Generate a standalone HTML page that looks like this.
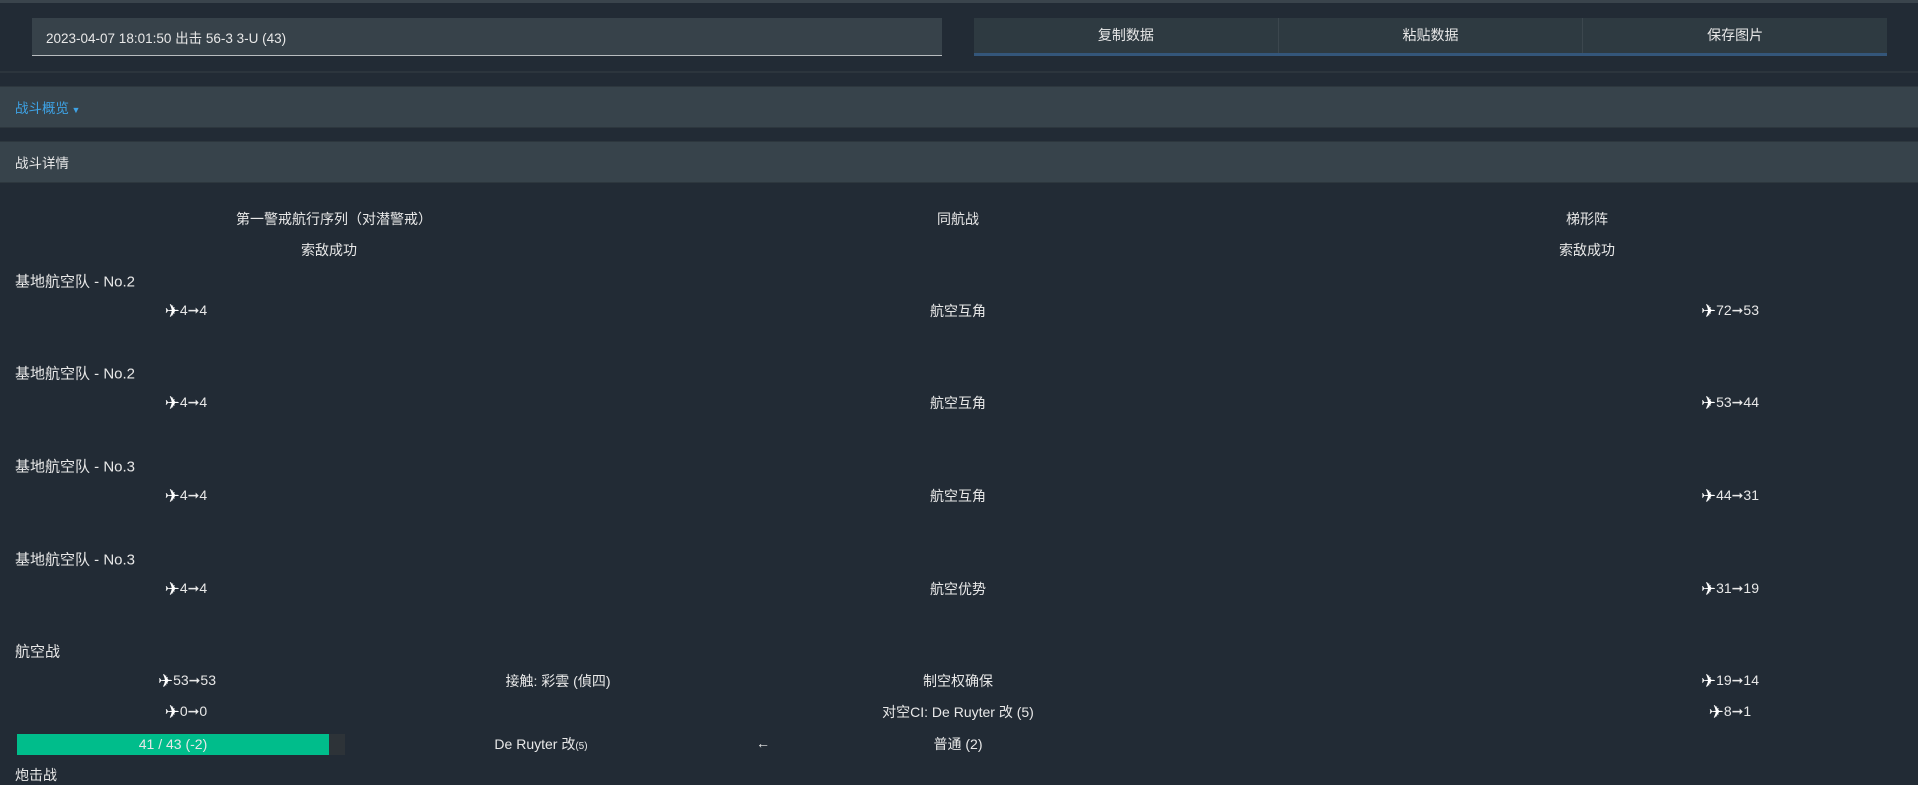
<!DOCTYPE html>
<html><head><meta charset="utf-8"><style>
*{margin:0;padding:0;box-sizing:border-box}
body{width:1918px;height:769px;overflow:hidden;background:#222b35;font-family:"Liberation Sans","Noto Sans CJK SC",sans-serif;color:#e8e8e8;position:relative;font-size:14px}
.a{position:absolute;white-space:nowrap}
.c{position:absolute;white-space:nowrap;transform:translate(-50%,-50%)}
.l{position:absolute;white-space:nowrap;transform:translateY(-50%);font-size:15px}
.p{font-size:18px;line-height:1;vertical-align:-2px;color:#fff}
</style></head><body>
<div class="a" style="left:0;top:0;width:1918px;height:3px;background:#3a444c"></div>
<div class="a" style="left:0;top:71px;width:1918px;height:2px;background:#2c353d"></div>
<div class="a" style="left:32px;top:18px;width:910px;height:38px;background:#37424a;border-bottom:1px solid #b8bcbf"></div>
<div class="l" style="left:46px;top:37px;font-size:13.5px">2023-04-07 18:01:50 出击 56-3 3-U (43)</div>
<div class="a" style="left:974px;top:18px;width:913px;height:38px;background:#2e3a41;border-bottom:3px solid #34567a;display:flex;font-size:14px">
<div style="flex:1;border-right:1px solid #3c474e;text-align:center;line-height:35px">复制数据</div>
<div style="flex:1;border-right:1px solid #3c474e;text-align:center;line-height:35px">粘贴数据</div>
<div style="flex:1;text-align:center;line-height:35px">保存图片</div></div>
<div class="a" style="left:0;top:86px;width:1918px;height:42px;background:#37434b;border-top:1px solid #2d373e;border-bottom:1px solid #2d373e"></div>
<div class="l" style="left:15px;top:107px;color:#3ea3e6;font-size:13.5px">战斗概览<span style="font-size:9px"> ▼</span></div>
<div class="a" style="left:0;top:141px;width:1918px;height:42px;background:#37434b;border-top:1px solid #2d373e;border-bottom:1px solid #2d373e"></div>
<div class="l" style="left:15px;top:162px;font-size:13.5px">战斗详情</div>

<div class="c" style="left:334px;top:219px">第一警戒航行序列（对潜警戒）</div>
<div class="c" style="left:958px;top:219px">同航战</div>
<div class="c" style="left:1587px;top:219px">梯形阵</div>
<div class="c" style="left:329px;top:250px">索敌成功</div>
<div class="c" style="left:1587px;top:250px">索敌成功</div>

<div class="l" style="left:15px;top:281px">基地航空队 - No.2</div>
<div class="c" style="left:186px;top:311px"><span class="p">✈</span>4➞4</div>
<div class="c" style="left:958px;top:311px">航空互角</div>
<div class="c" style="left:1730px;top:311px"><span class="p">✈</span>72➞53</div>

<div class="l" style="left:15px;top:373px">基地航空队 - No.2</div>
<div class="c" style="left:186px;top:403px"><span class="p">✈</span>4➞4</div>
<div class="c" style="left:958px;top:403px">航空互角</div>
<div class="c" style="left:1730px;top:403px"><span class="p">✈</span>53➞44</div>

<div class="l" style="left:15px;top:466px">基地航空队 - No.3</div>
<div class="c" style="left:186px;top:496px"><span class="p">✈</span>4➞4</div>
<div class="c" style="left:958px;top:496px">航空互角</div>
<div class="c" style="left:1730px;top:496px"><span class="p">✈</span>44➞31</div>

<div class="l" style="left:15px;top:559px">基地航空队 - No.3</div>
<div class="c" style="left:186px;top:589px"><span class="p">✈</span>4➞4</div>
<div class="c" style="left:958px;top:589px">航空优势</div>
<div class="c" style="left:1730px;top:589px"><span class="p">✈</span>31➞19</div>

<div class="l" style="left:15px;top:651px">航空战</div>
<div class="c" style="left:187px;top:681px"><span class="p">✈</span>53➞53</div>
<div class="c" style="left:558px;top:681px">接触: 彩雲 (偵四)</div>
<div class="c" style="left:958px;top:681px">制空权确保</div>
<div class="c" style="left:1730px;top:681px"><span class="p">✈</span>19➞14</div>
<div class="c" style="left:186px;top:712px"><span class="p">✈</span>0➞0</div>
<div class="c" style="left:958px;top:712px">对空CI: De Ruyter 改 (5)</div>
<div class="c" style="left:1730px;top:712px"><span class="p">✈</span>8➞1</div>

<div class="a" style="left:17px;top:734px;width:328px;height:21px;background:#2d3338"></div>
<div class="a" style="left:17px;top:734px;width:312px;height:21px;background:#00bd8b;text-align:center;line-height:21px">41 / 43 (-2)</div>
<div class="c" style="left:541px;top:744px">De Ruyter 改<span style="font-size:10px">(5)</span></div>
<div class="c" style="left:763px;top:743px;font-weight:bold">←</div>
<div class="c" style="left:958px;top:744px">普通 (2)</div>
<div class="a" style="left:15px;top:765px;font-size:14px">炮击战</div>
</body></html>
